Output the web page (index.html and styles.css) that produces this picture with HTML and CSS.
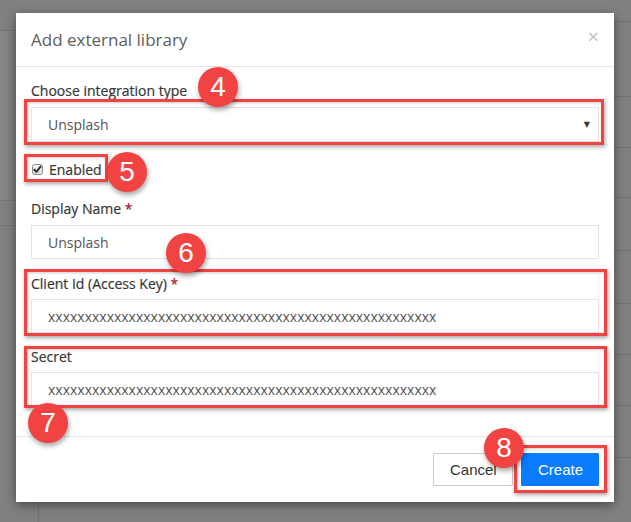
FILE: index.html
```html
<!DOCTYPE html>
<html lang="en">
<head>
    <meta charset="UTF-8">
    <meta name="viewport" content="width=device-width, initial-scale=1.0">
    <title>Add external library</title>
    <link rel="stylesheet" href="styles.css">
</head>
<body>
    <div class="page">
        <div class="modal">
            <div class="modal-header">
                <h4 class="modal-title">Add external library</h4>
                <span class="close">&times;</span>
            </div>

            <div class="modal-body">
                <div class="form-group">
                    <label>Choose integration type</label>
                    <div class="select">
                        <span>Unsplash</span>
                        <span class="caret">&#9660;</span>
                    </div>
                </div>

                <div class="checkbox">
                    <svg width="11" height="11" viewBox="0 0 11 11">
                        <defs>
                            <linearGradient id="cb" x1="0" y1="0" x2="0" y2="1">
                                <stop offset="0" stop-color="#fafafa"/>
                                <stop offset="1" stop-color="#d8d8d8"/>
                            </linearGradient>
                        </defs>
                        <rect x="0.5" y="0.5" width="10" height="10" rx="2" fill="url(#cb)" stroke="#8c8c8c"/>
                        <path d="M2.3 5.6 L4.4 7.9 L8.8 2.4" fill="none" stroke="#2b2b2b" stroke-width="1.9" stroke-linecap="round" stroke-linejoin="round"/>
                    </svg>
                    <span>Enabled</span>
                </div>

                <div class="form-group name-group">
                    <label>Display Name <span class="req">*</span></label>
                    <div class="input">Unsplash</div>
                </div>

                <div class="form-group client-group">
                    <label>Client Id (Access Key) <span class="req">*</span></label>
                    <div class="input">xxxxxxxxxxxxxxxxxxxxxxxxxxxxxxxxxxxxxxxxxxxxxxxxxxxxx</div>
                </div>

                <div class="form-group secret-group">
                    <label>Secret</label>
                    <div class="input">xxxxxxxxxxxxxxxxxxxxxxxxxxxxxxxxxxxxxxxxxxxxxxxxxxxxx</div>
                </div>
            </div>

            <div class="modal-footer">
                <button class="btn btn-default">Cancel</button>
                <button class="btn btn-primary">Create</button>
            </div>

            <!-- tutorial annotations -->
            <span class="mark mark-type"></span>
            <span class="mark mark-enabled"></span>
            <span class="mark mark-client"></span>
            <span class="mark mark-secret"></span>
            <span class="mark mark-create"></span>

            <span class="badge badge-4">4</span>
            <span class="badge badge-5">5</span>
            <span class="badge badge-6">6</span>
            <span class="badge badge-7">7</span>
            <span class="badge badge-8">8</span>
        </div>
    </div>
</body>
</html>
```

FILE: styles.css
```css
body {
    margin: 0;
    height: 522px;
    overflow: hidden;
    font-family: "Open Sans", Arial, sans-serif;
    background-color: #808080;
    background-image:
        linear-gradient(#717171, #717171),
        linear-gradient(#717171, #717171),
        linear-gradient(#717171, #717171),
        linear-gradient(#717171, #717171),
        linear-gradient(#717171, #717171),
        linear-gradient(#717171, #717171),
        linear-gradient(#717171, #717171),
        linear-gradient(#717171, #717171),
        linear-gradient(#717171, #717171),
        linear-gradient(#747474, #747474),
        linear-gradient(#747474, #747474),
        linear-gradient(#747474, #747474),
        linear-gradient(#858585, #858585),
        linear-gradient(#717171, #717171);
    background-repeat: no-repeat;
    background-size:
        17px 1px, 17px 1px, 17px 1px, 17px 1px, 17px 1px,
        17px 1px, 17px 1px, 17px 1px, 17px 1px,
        16px 1px, 16px 1px, 16px 1px,
        8px 170px,
        1px 20px;
    background-position:
        right 0 top 21px, right 0 top 96px, right 0 top 147px,
        right 0 top 197px, right 0 top 250px, right 0 top 303px,
        right 0 top 354px, right 0 top 405px, right 0 top 457px,
        0 30px, 0 200px, 0 225px,
        0 30px,
        38px 502px;
}

.page {
    padding: 13px 17px 0 16px;
}

.modal {
    position: relative;
    width: 598px;
    height: 489px;
    background: #fff;
    box-shadow: 0 3px 10px rgba(0, 0, 0, 0.45);
    display: flex;
    flex-direction: column;
}

.modal-header {
    height: 53px;
    padding: 0 15px;
    border-bottom: 1px solid #e5e5e5;
    display: flex;
    align-items: center;
    justify-content: space-between;
}

.modal-title {
    margin: 0;
    font-size: 17px;
    font-weight: 400;
    color: #5e5e5e;
}

.close {
    font-size: 20px;
    color: #c4c4c4;
    margin-top: -6px;
    margin-right: 0;
}

.modal-body {
    padding: 14px 15px 30px 15px;
    border-bottom: 1px solid #e5e5e5;
}

.form-group label {
    display: block;
    font-size: 14px;
    font-weight: 500;
    line-height: 20px;
    color: #363636;
    margin-bottom: 6px;
    -webkit-text-stroke: 0.2px #363636;
}

.req {
    color: #d0021b;
}

.select,
.input {
    height: 32px;
    border: 1px solid #e3e3e3;
    padding: 0 16px;
    font-size: 14px;
    color: #555;
    display: flex;
    align-items: center;
    justify-content: space-between;
}

.select {
    height: 33px;
    padding-right: 8px;
}

.caret {
    font-family: "DejaVu Sans", sans-serif;
    font-size: 8px;
    color: #3a3a3a;
}

.checkbox {
    margin-top: 15px;
    height: 24px;
    display: flex;
    align-items: center;
    gap: 6px;
    padding-left: 1px;
    font-size: 14px;
    font-weight: 500;
    color: #363636;
    -webkit-text-stroke: 0.2px #363636;
}

.name-group {
    margin-top: 18px;
}

.client-group {
    margin-top: 15px;
}

.client-group label,
.secret-group label {
    margin-bottom: 5px;
}

.secret-group {
    margin-top: 14px;
}

.modal-footer {
    padding: 16px 15px 0 15px;
    display: flex;
    justify-content: flex-end;
    gap: 8px;
}

.btn {
    height: 33px;
    padding: 0 16px;
    font-family: "Liberation Sans", Arial, sans-serif;
    font-size: 15px;
    border-radius: 1px;
}

.btn-default {
    width: 80px;
    background: #fff;
    border: 1px solid #ccc;
    color: #333;
}

.btn-primary {
    width: 78px;
    background: #0a7bff;
    border: 1px solid #0a7bff;
    color: #fff;
}

.mark {
    position: absolute;
    border: 3px solid #f24343;
    box-shadow: 1px 2px 4px rgba(0, 0, 0, 0.35), inset 1px 1px 3px rgba(0, 0, 0, 0.2);
}

.mark-type    { left: 8px;   top: 86px;  width: 574px; height: 40px; }
.mark-enabled { left: 8px;   top: 141px; width: 78px;  height: 22px; }
.mark-client  { left: 8px;   top: 256px; width: 577px; height: 61px; }
.mark-secret  { left: 8px;   top: 333px; width: 577px; height: 56px; }
.mark-create  { left: 498px; top: 432px; width: 87px;  height: 42px; }

.badge {
    position: absolute;
    width: 40px;
    height: 40px;
    border-radius: 50%;
    background: #f24343;
    color: #fff;
    font-family: "Liberation Sans", Arial, sans-serif;
    font-size: 28px;
    line-height: 40px;
    text-align: center;
    box-shadow: 1px 3px 5px rgba(0, 0, 0, 0.35);
}

.badge-4 { left: 182px; top: 54px; }
.badge-5 { left: 91px;  top: 139px; }
.badge-6 { left: 150px; top: 220px; }
.badge-7 { left: 12px;  top: 390px; }
.badge-8 { left: 468px; top: 415px; }
```
